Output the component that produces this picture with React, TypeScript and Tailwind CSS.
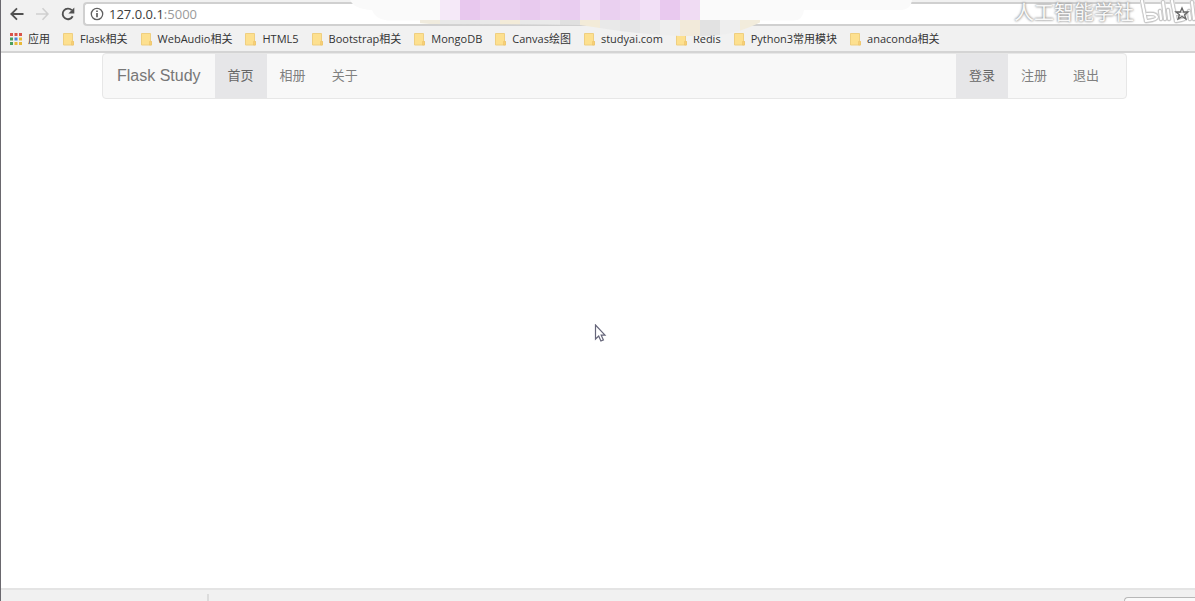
import clsx from 'clsx'

const bookmarks = [
  'Flask相关',
  'WebAudio相关',
  'HTML5',
  'Bootstrap相关',
  'MongoDB',
  'Canvas绘图',
  'studyai.com',
  'Redis',
  'Python3常用模块',
  'anaconda相关',
]

const mainLinks = ['首页', '相册', '关于']
const userLinks = ['登录', '注册', '退出']

const appDots = [
  '#d9534a', '#d9534a', '#d9534a',
  '#4a9e5c', '#4a86d8', '#e9b93a',
  '#4a9e5c', '#e9b93a', '#e9b93a',
]

const topTiles = [
  '#f5e9f8', '#e8c8ee', '#ecd0f0', '#ead0f0', '#e8caee', '#ebd0f0', '#e9cdf0',
  '#f0ddf4', '#ead0f0', '#edd6f2', '#f2e0f6', '#e9c9ef', '#f0dcf3',
]

const lowerTiles = [
  '#f0ebdd', '#e9e9e9', '#e7e7e7', '#e9e9e9', '#f3ebd8', '#e9e9e9', '#eaeaea',
  '#e0e0e0', '#f3ebd8', '#e9e9e9', '#e5e5e6', '#e9e9e9', '#eeeeee', '#f2eada',
  '#e2e2e2', '#eeeeee', '#f2ecdc',
]

const biliPath =
  'M2 1L6 21Q17 20 17 17Q16 13 7 14M20 11l1 8M23 2l2 17M28 10l1 9M32 1L36 21Q46 20 46 17Q45 13 37 14M49 11l1 8M52 2l2 17'

function AppsIcon() {
  return (
    <svg width="13" height="13" viewBox="0 0 13 13" aria-hidden="true">
      {appDots.map((color, i) => (
        <rect
          key={i}
          x={(i % 3) * 4.5}
          y={Math.floor(i / 3) * 4.5}
          width="3"
          height="3"
          fill={color}
        />
      ))}
    </svg>
  )
}

function FolderIcon() {
  return (
    <svg width="12" height="14" viewBox="0 0 12 14" aria-hidden="true">
      <path d="M.5 1.500h9v8h1v3.500H.5z" fill="#fde08f" stroke="#efcf80" />
      <path d="M8.500 13v-3.500h2V13z" fill="#f6cf78" stroke="#efc56a" strokeWidth=".6" />
    </svg>
  )
}

function Toolbar() {
  return (
    <div className="flex h-[27px] items-center bg-[#f1f1f1]">
      <button aria-label="Back" className="ml-[9px]">
        <svg width="14" height="14" viewBox="0 0 14 14" fill="none" stroke="#505050" strokeWidth="1.800">
          <path d="M13.500 7H1.500M7 1.300L1.300 7L7 12.700" />
        </svg>
      </button>
      <button aria-label="Forward" className="ml-3">
        <svg width="13" height="14" viewBox="0 0 13 14" fill="none" stroke="#cfcfcf" strokeWidth="1.600">
          <path d="M0 7h12M6.500 1.300L12 7l-5.500 5.700" />
        </svg>
      </button>
      <button aria-label="Reload" className="ml-3">
        <svg width="14" height="14" viewBox="0 0 14 14" fill="none">
          <path d="M11.700 9.300A5.300 5.300 0 1 1 10.800 3.200" stroke="#505050" strokeWidth="1.900" />
          <path d="M13.300.6v6H7.400z" fill="#505050" />
        </svg>
      </button>
      <div className="ml-2 flex h-6 flex-1 items-center rounded-l-sm border-2 border-r-0 border-[#d0d0d0] bg-white pl-[5px]">
        <svg width="14" height="14" viewBox="0 0 14 14" fill="none" stroke="#606060" aria-hidden="true">
          <circle cx="7" cy="7" r="5.700" strokeWidth="1.300" />
          <path d="M7 6v4.300M7 3.500v1.500" strokeWidth="1.700" />
        </svg>
        <div className="ml-[5px] font-['Open_Sans',sans-serif] text-[13px] leading-5 text-[#9a9a9a]">
          <span className="text-[#3c3c3c]">127.0.0.1</span>:5000
        </div>
      </div>
    </div>
  )
}

function BookmarksBar() {
  return (
    <div className="flex h-[26px] items-center gap-[13px] border-b-2 border-[#d4d4d4] bg-[#f1f1f1] pl-[9px] font-['Open_Sans','Noto_Sans_CJK_SC',sans-serif] text-[11px] leading-4 text-[#333]">
      <a href="#apps" className="flex shrink-0 items-center gap-[5px]">
        <AppsIcon />
        应用
      </a>
      {bookmarks.map((name) => (
        <a
          key={name}
          href="#bookmark"
          className="flex shrink-0 items-center gap-[5px] whitespace-nowrap"
        >
          <FolderIcon />
          {name}
        </a>
      ))}
    </div>
  )
}

function NavLinks({ items }: { items: string[] }) {
  return (
    <ul className="flex">
      {items.map((item, i) => (
        <li key={item}>
          <a
            href="#nav"
            className={clsx(
              'flex h-full items-center px-[13px]',
              i === 0 ? 'bg-[#e6e6e8] text-[#666]' : 'text-[#808080]',
            )}
          >
            {item}
          </a>
        </li>
      ))}
    </ul>
  )
}

function Navbar() {
  return (
    <nav className="mr-[68px] ml-[101px] flex h-[46px] rounded border border-[#e7e7e7] bg-[#f8f8f8] pr-3.5 font-['Liberation_Sans','Noto_Sans_CJK_SC',sans-serif] text-[13px]">
      <a href="#home" className="flex items-center px-3.5 text-base text-[#777]">
        Flask Study
      </a>
      <NavLinks items={mainLinks} />
      <div className="flex-1" />
      <NavLinks items={userLinks} />
    </nav>
  )
}

// Pixelated smear over the address bar
function Mosaic() {
  return (
    <svg
      className="pointer-events-none absolute top-0 left-[349px]"
      width="562"
      height="38"
      viewBox="350 0 562 38"
      aria-hidden="true"
    >
      <defs>
        <clipPath id="smear">
          <path d="M387 20H765Q757 24 750 27Q730 36 700 36H680Q635 34 600 28L580 25Q500 24 430 24Q405 22 387 20z" />
        </clipPath>
      </defs>
      <path d="M350 0H912Q911 9 902 10H804Q803 20 794 20.500H387Q375 19 372 10Q354 9 350 0z" fill="#fafafa" />
      <g clipPath="url(#smear)">
        {lowerTiles.map((color, i) => (
          <rect key={i} x={420 + i * 20} y="20" width="20" height="16" fill={color} />
        ))}
      </g>
      {topTiles.map((color, i) => (
        <rect key={i} x={440 + i * 20} y="0" width="20" height="20" fill={color} />
      ))}
    </svg>
  )
}

function Watermark() {
  return (
    <div className="pointer-events-none absolute top-0 right-0 flex">
      <span className="font-['Liberation_Sans','Noto_Sans_CJK_SC',sans-serif] text-[20px] leading-[26px] text-[#f8f8f8] [text-shadow:0_0_2px_#888,0_0_3px_#999]">
        人工智能学社
      </span>
      <svg className="ml-1.5 shrink-0" width="55" height="26" viewBox="0 0 55 26" fill="none" aria-hidden="true">
        <g strokeLinecap="round" strokeLinejoin="round">
          <path d={biliPath} stroke="#dedede" strokeWidth="5" />
          <path d={biliPath} stroke="#bcbcbc" strokeWidth="3.400" />
          <path d={biliPath} stroke="#fff" strokeWidth="2.200" />
        </g>
        <path d="M42 8l1.700 4h4.300l-3.400 2.700 1.300 4.300-3.900-2.500-3.900 2.500 1.300-4.300L36 12h4.300z" stroke="#666" strokeWidth="1.300" />
      </svg>
    </div>
  )
}

function Cursor() {
  return (
    <svg
      className="pointer-events-none absolute top-[324px] left-[593px]"
      width="13"
      height="19"
      viewBox="0 0 13 19"
      aria-hidden="true"
    >
      <path
        d="M1.500 1v14l3.200-3 2.200 5 2.500-1.100-2.200-4.700h3.800z"
        fill="#fff"
        stroke="#66667a"
        strokeWidth="1.200"
      />
    </svg>
  )
}

export default function App() {
  return (
    <div className="relative flex h-screen flex-col overflow-hidden border-l border-[#6a686e] bg-white">
      <header>
        <Toolbar />
        <BookmarksBar />
      </header>
      <main className="flex-1">
        <Navbar />
      </main>
      <footer className="flex h-[13px] items-end justify-between border-t-2 border-[#e4e4e4] bg-[#f1f1f1]">
        <div className="h-[7px] w-[208px] border-r-2 border-[#dcdcdc]" />
        <div className="h-1 w-[71px] rounded-tl border-t border-l border-[#b8b8b8] bg-[#fafafa]" />
      </footer>
      <Mosaic />
      <Watermark />
      <Cursor />
    </div>
  )
}
